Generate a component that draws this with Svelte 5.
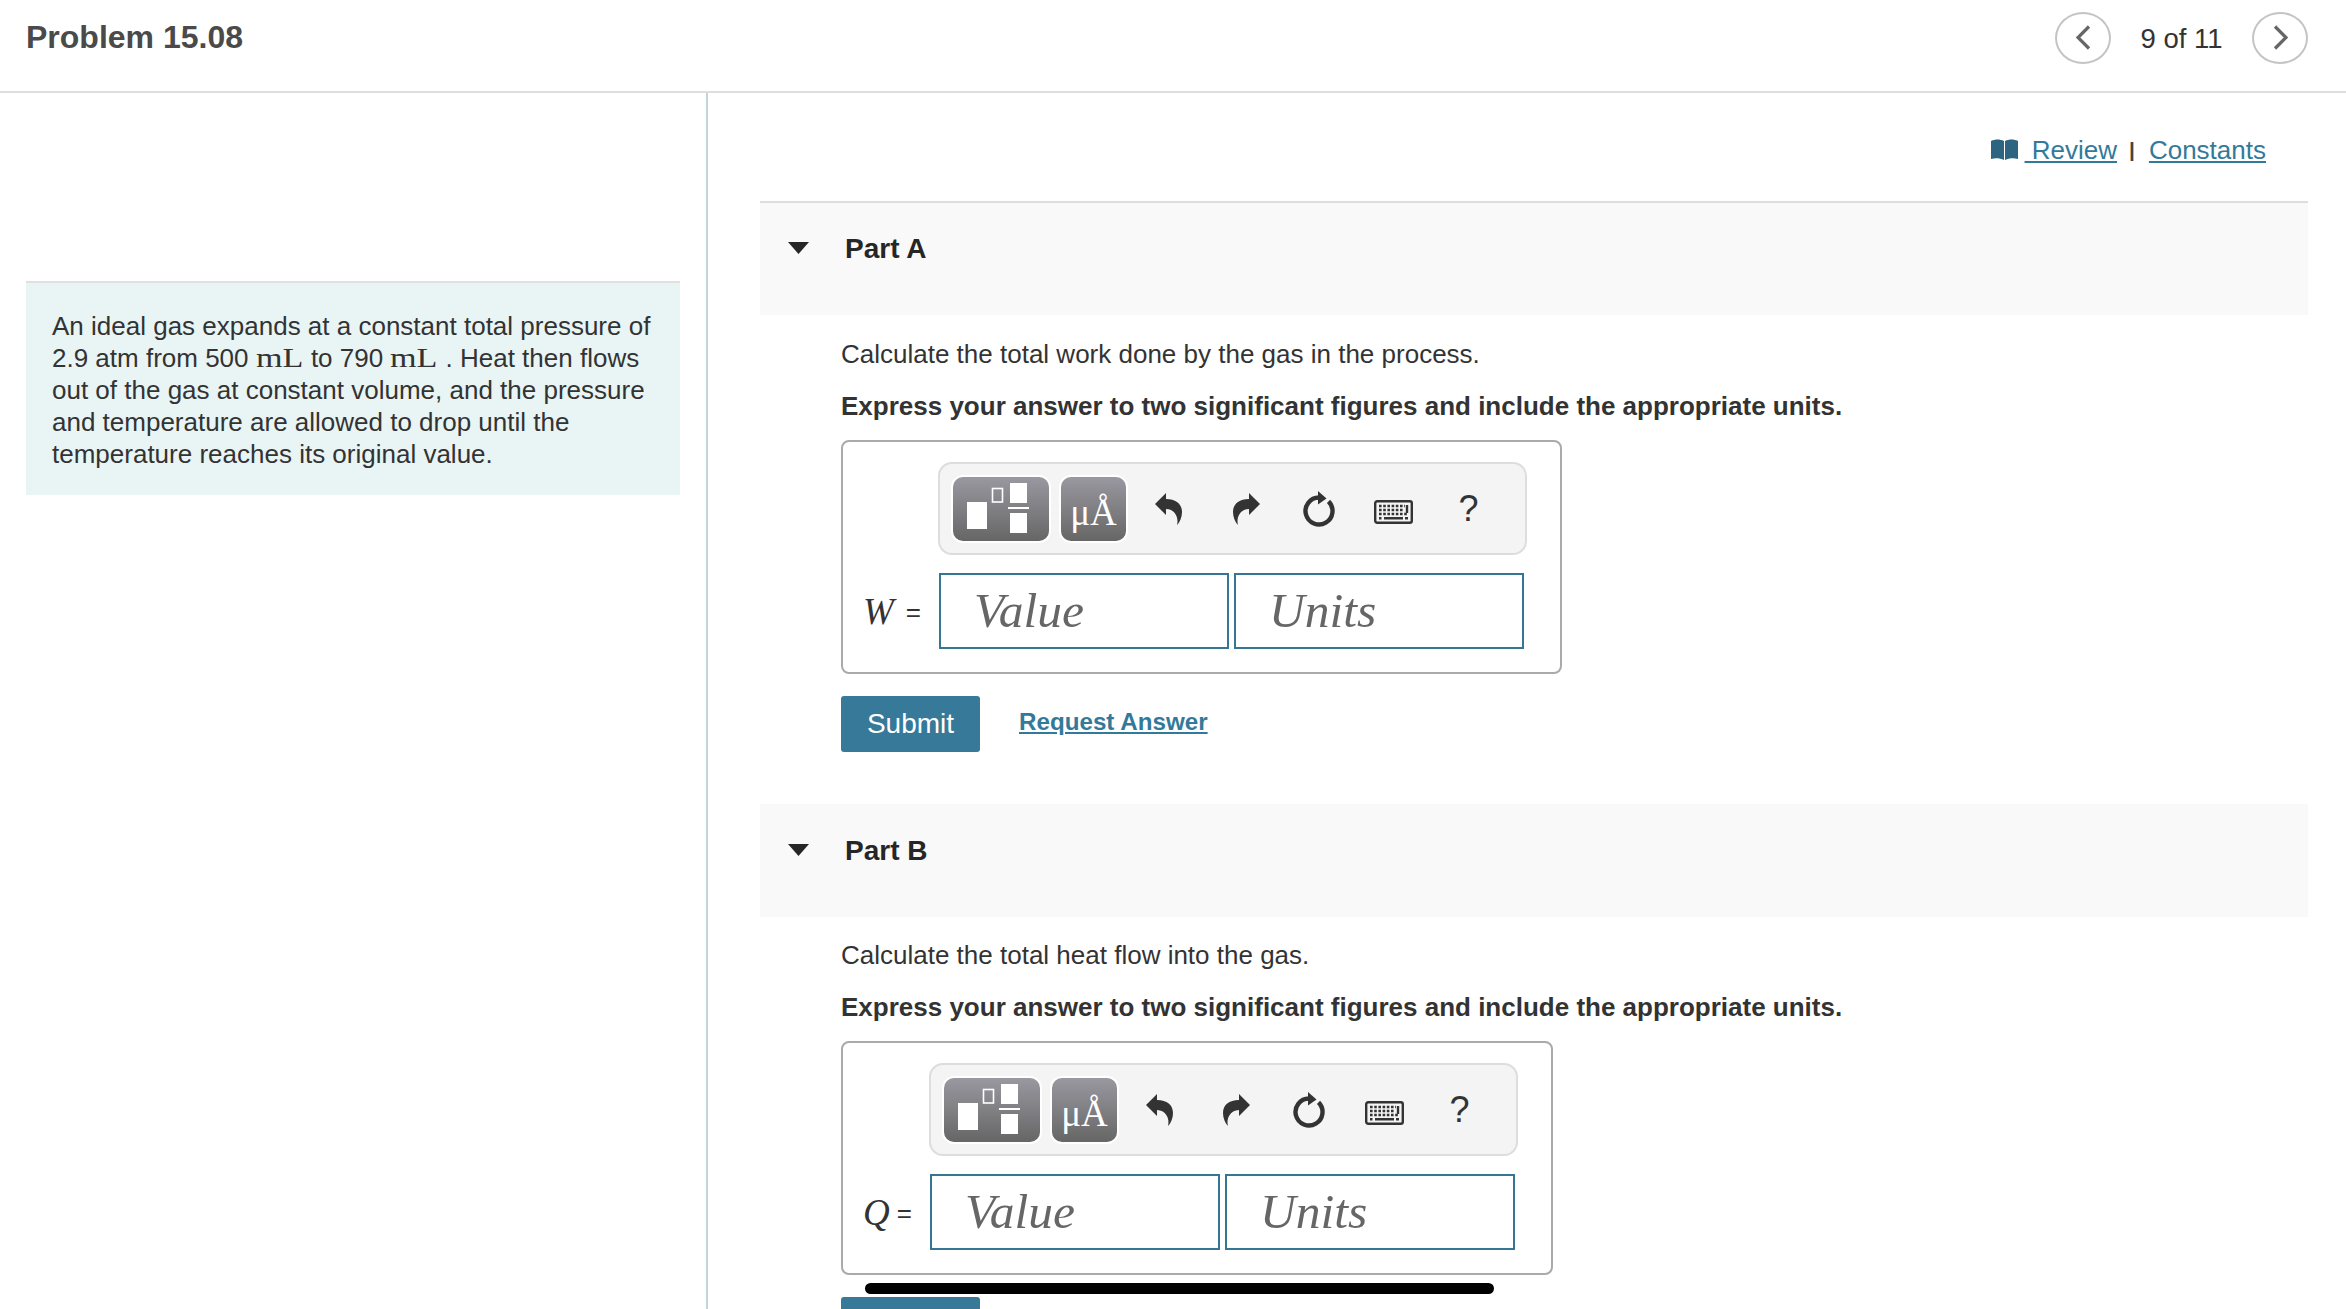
<script lang="ts">
  const parts = [
    { id: 'A', prompt: 'Calculate the total work done by the gas in the process.', symbol: 'W' },
    { id: 'B', prompt: 'Calculate the total heat flow into the gas.', symbol: 'Q' }
  ];
</script>

<div class="page">
  <header class="topbar">
    <h1>Problem 15.08</h1>
    <nav class="pager">
      <button class="round" aria-label="Previous">
        <svg width="15" height="25" viewBox="0 0 15 25"><path d="M13 1.5 L2 12.5 L13 23.5" fill="none" stroke="#666" stroke-width="3.2"/></svg>
      </button>
      <span class="count">9 of 11</span>
      <button class="round" aria-label="Next">
        <svg width="15" height="25" viewBox="0 0 15 25"><path d="M2 1.5 L13 12.5 L2 23.5" fill="none" stroke="#666" stroke-width="3.2"/></svg>
      </button>
    </nav>
  </header>

  <div class="columns">
    <aside class="intro">
      <p class="statement">
        An ideal gas expands at a constant total pressure of 2.9 atm from 500 <span class="unit">mL</span> to 790 <span class="unit">mL</span> . Heat then flows out of the gas at constant volume, and the pressure and temperature are allowed to drop until the temperature reaches its original value.
      </p>
    </aside>

    <main class="work">
      <div class="links">
        <svg class="book" width="27" height="22" viewBox="0 0 27 22">
          <path d="M0 2 C4 0 9 0 13 2 V21 C9 19 4 19 0 20 Z" fill="#2d6480"/>
          <path d="M27 2 C23 0 18 0 14 2 V21 C18 19 23 19 27 20 Z" fill="#2d6480"/>
        </svg>
        <a href="#review" class="review">&nbsp;Review</a>
        <span class="sep">|</span>
        <a href="#constants">Constants</a>
      </div>

      {#each parts as part, i}
        <section class="part">
          <div class="part-head" class:first={i === 0}>
            <svg width="21" height="12" viewBox="0 0 21 12"><path d="M0 0 H21 L10.5 12 Z" fill="#262626"/></svg>
            <h2>Part {part.id}</h2>
          </div>
          <div class="part-body">
            <p class="prompt">{part.prompt}</p>
            <p class="hint">Express your answer to two significant figures and include the appropriate units.</p>

            <div class="answer">
              <div class="toolbar">
                <button class="tpl" aria-label="Templates">
                  <svg width="96" height="64" viewBox="0 0 96 64">
                    <rect x="14" y="25" width="20" height="27" fill="#fff"/>
                    <rect x="39.5" y="11.5" width="10" height="13.5" fill="none" stroke="#fff" stroke-width="1.6"/>
                    <rect x="57" y="6" width="17" height="20" fill="#fff"/>
                    <rect x="55" y="30" width="21" height="2" fill="#fff"/>
                    <rect x="57" y="36" width="17" height="20" fill="#fff"/>
                  </svg>
                </button>
                <button class="tpl sym">μÅ</button>
                <span class="tool">
                  <svg width="27" height="32" viewBox="0 0 27 32"><path d="M0 11 L11 0 V6 C21 6 27 11 27 19 C27 24 25 29 22 32 C24 25 20 16 11 16 V22 Z" fill="#333"/></svg>
                </span>
                <span class="tool redo">
                  <svg width="27" height="32" viewBox="0 0 27 32"><path d="M27 11 L16 0 V6 C6 6 0 11 0 19 C0 24 2 29 5 32 C3 25 7 16 16 16 V22 Z" fill="#333"/></svg>
                </span>
                <span class="tool">
                  <svg width="32" height="36" viewBox="0 0 32 36">
                    <path d="M16 6.5 A13.5 13.5 0 1 0 25.5 10.4" fill="none" stroke="#333" stroke-width="4.4"/>
                    <path d="M15 0 L23.5 7.5 L15 13.5 Z" fill="#333"/>
                  </svg>
                </span>
                <span class="tool keys">
                  <svg width="39" height="24" viewBox="0 0 39 24">
                    <rect x="1.2" y="1.2" width="36.6" height="21.6" rx="2" fill="none" stroke="#333" stroke-width="2.4"/>
                    <path d="M5 6 H31 M5 10 H29 M5 14 H33" fill="none" stroke="#333" stroke-width="2.4" stroke-dasharray="2.6 1.6"/>
                    <path d="M10 18.2 H29 M5 18.2 H7.5 M31 18.2 H34 M33 5 V13" fill="none" stroke="#333" stroke-width="2.4"/>
                  </svg>
                </span>
                <span class="tool qmark">?</span>
              </div>

              <div class="label sym-{part.symbol}"><i>{part.symbol}</i><span>=</span></div>
              <div class="fields">
                <div class="field">Value</div>
                <div class="field">Units</div>
              </div>
            </div>

            <div class="actions">
              <button class="submit">Submit</button>
              <a href="#answer" class="request">Request Answer</a>
            </div>
          </div>
        </section>
      {/each}
    </main>
  </div>

  <div class="scrollbar"></div>
</div>

<style>
  :global(body) {
    margin: 0;
    background: #fff;
  }

  .page {
    position: relative;
    height: 1309px;
    overflow: hidden;
    font-family: "Liberation Sans", Arial, sans-serif;
    font-size: 26px;
    line-height: 32px;
    color: #333;
  }

  .topbar {
    display: flex;
    justify-content: space-between;
    height: 91px;
    padding: 0 38px 0 26px;
    border-bottom: 2px solid #ddd;
  }

  h1 {
    margin: 18px 0 0;
    font-size: 32px;
    line-height: 38px;
    font-weight: 700;
    color: #4a4a4a;
  }

  .pager {
    display: flex;
    align-items: center;
    height: 75px;
  }

  .round {
    display: flex;
    align-items: center;
    justify-content: center;
    width: 56px;
    height: 52px;
    padding: 0;
    border: 2px solid #c4c4c4;
    border-radius: 50%;
    background: #fff;
  }

  .count {
    width: 141px;
    text-align: center;
    margin-top: 3px;
    font-size: 27.5px;
  }

  .columns {
    display: flex;
    height: 1216px;
  }

  .intro {
    box-sizing: border-box;
    flex: none;
    width: 708px;
    padding: 188px 26px 0 26px;
    border-right: 2px solid #c5d3dd;
  }

  .statement {
    margin: 0;
    padding: 27px 26px 25px;
    background: #e9f5f5;
    border-top: 2px solid #e0e0e0;
  }

  /* the math font in the original is wider than any serif installed here */
  .unit {
    display: inline-block;
    margin-right: 9px;
    font-family: "Liberation Serif", "Times New Roman", serif;
    font-size: 28px;
    transform: scaleX(1.22);
    transform-origin: left;
  }

  .work {
    flex: 1;
    padding: 0 38px 0 52px;
  }

  .links {
    display: flex;
    justify-content: flex-end;
    align-items: center;
    height: 32px;
    margin: 41px 42px 35px 0;
  }

  a {
    color: #337a9a;
    text-decoration: underline;
  }

  .book {
    margin-right: 7px;
  }

  .sep {
    margin: 0 14px 0 12px;
    font-size: 21px;
    font-weight: 700;
    color: #444;
  }

  .part-head {
    display: flex;
    align-items: flex-start;
    height: 113px;
    padding-left: 28px;
    background: #f9f9f9;
  }

  .part-head.first {
    box-sizing: border-box;
    height: 114px;
    border-top: 2px solid #ddd;
  }

  .part-head svg {
    flex: none;
    margin-top: 40px;
  }

  .part-head.first svg {
    margin-top: 39px;
  }

  h2 {
    margin: 31px 0 0 36px;
    font-size: 28px;
    line-height: 32px;
    font-weight: 700;
    color: #262626;
  }

  .part-head.first h2 {
    margin-top: 30px;
  }

  .part-body {
    padding-left: 81px;
  }

  .prompt {
    margin: 23px 0 20px;
  }

  .part:last-child .prompt {
    margin-top: 22px;
  }

  .hint {
    margin: 0 0 18px;
    font-weight: 700;
  }

  .answer {
    display: grid;
    grid-template-columns: auto auto;
    column-gap: 18px;
    row-gap: 18px;
    width: fit-content;
    padding: 20px 33px 23px 20px;
    border: 2px solid #aaa;
    border-radius: 8px;
  }

  .toolbar {
    grid-column: 2;
    display: flex;
    align-items: center;
    box-sizing: border-box;
    width: 589px;
    height: 93px;
    margin-left: -1px;
    padding-left: 13px;
    background: #f4f4f4;
    border: 2px solid #ddd;
    border-radius: 14px;
  }

  .tpl {
    display: block;
    flex: none;
    width: 96px;
    height: 64px;
    padding: 0;
    border: none;
    border-radius: 10px;
    background: linear-gradient(#9a98a0, #666);
    box-shadow: 0 0 0 2px #fff;
  }

  .tpl svg {
    display: block;
  }

  .sym {
    width: 65px;
    margin: 0 5px 0 12px;
    padding-top: 8px;
    color: #fff;
    font-family: "Liberation Serif", "Times New Roman", serif;
    font-size: 37px;
    line-height: 54px;
  }

  .tool {
    display: flex;
    align-items: center;
    justify-content: center;
    flex: none;
    box-sizing: border-box;
    width: 75px;
  }

  .redo {
    padding-left: 5px;
  }

  .keys {
    margin-top: 6px;
  }

  .qmark {
    font-size: 36px;
  }

  .label {
    display: flex;
    align-items: center;
    padding-top: 2px;
    font-size: 26px;
  }

  .sym-W {
    gap: 12px;
  }

  .sym-Q {
    gap: 7px;
  }

  .label i {
    font-family: "Liberation Serif", "Times New Roman", serif;
    font-size: 37px;
  }

  .fields {
    display: flex;
    gap: 5px;
  }

  .field {
    box-sizing: border-box;
    width: 290px;
    height: 76px;
    padding-left: 33px;
    border: 2.5px solid #377595;
    font-family: "Liberation Serif", "Times New Roman", serif;
    font-style: italic;
    font-size: 49.5px;
    line-height: 72px;
    color: #666;
  }

  .actions {
    display: flex;
    align-items: flex-start;
    margin: 22px 0 52px;
  }

  .submit {
    width: 139px;
    height: 56px;
    padding: 0;
    border: none;
    border-radius: 3px;
    background: #377998;
    color: #fff;
    font: 28px/32px "Liberation Sans", Arial, sans-serif;
  }

  .request {
    margin: 10px 0 0 39px;
    font-size: 24.2px;
    line-height: 32px;
    font-weight: 700;
  }

  .scrollbar {
    position: absolute;
    left: 865px;
    top: 1283px;
    width: 629px;
    height: 11px;
    border-radius: 6px;
    background: #000;
  }
</style>
